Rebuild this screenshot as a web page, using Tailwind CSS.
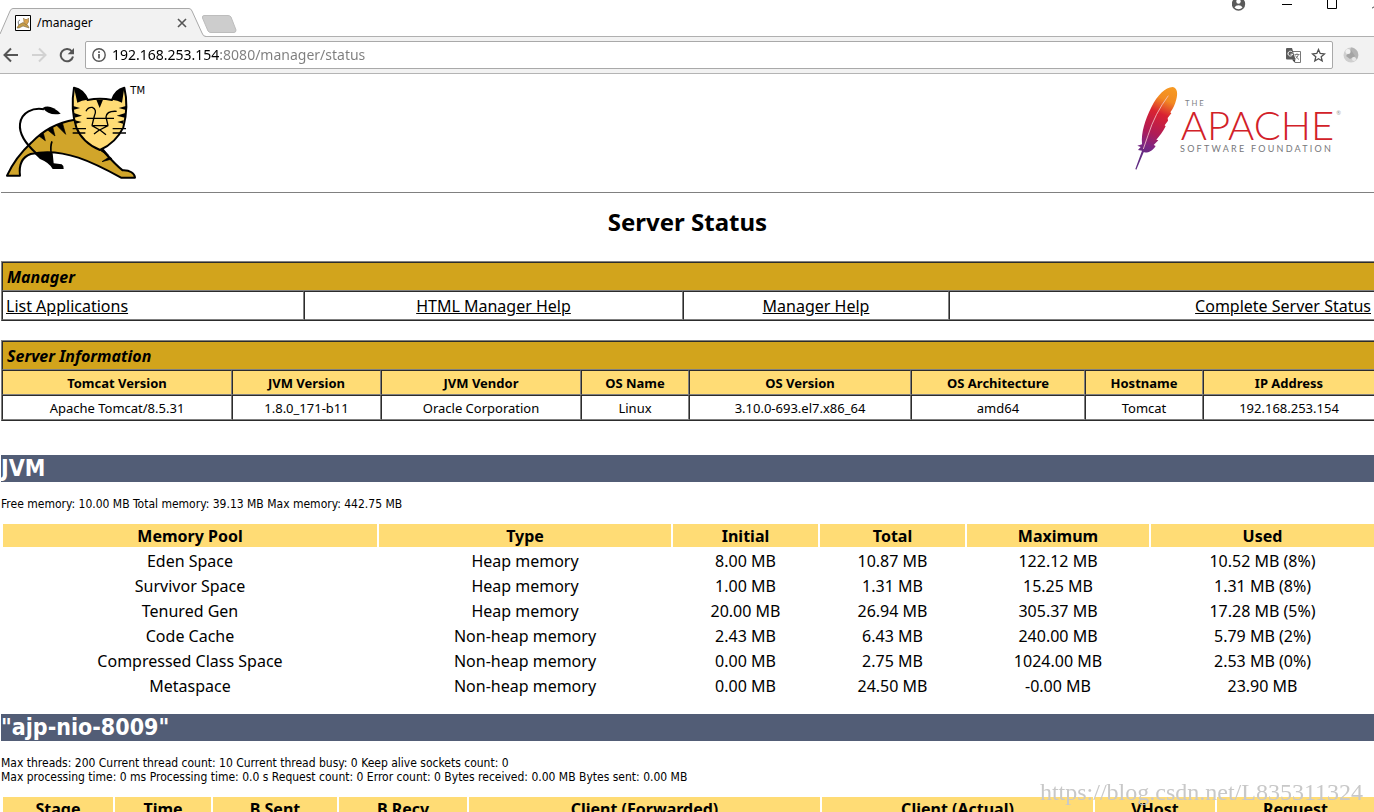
<!DOCTYPE html>
<html lang="en">

<head>
  <meta charset="UTF-8" />
  <meta name="viewport" content="width=device-width, initial-scale=1.0" />
  <title>/manager</title>
  <script src="https://cdn.jsdelivr.net/npm/@tailwindcss/browser@4"></script>
</head>

<body class="h-screen overflow-hidden bg-white text-black font-['Noto_Sans','Open_Sans',sans-serif] text-[16px] leading-[23px]">
  <!-- Browser chrome -->
  <div class="border-b border-[#b4b4b4] bg-[#f2f2f2]">
    <div class="relative flex h-[37px] border-b border-[#b0b0b0] bg-white">
      <svg class="absolute top-0 left-0 h-[37px] w-[240px]" viewBox="0 0 240 37" fill="none">
        <path d="M-1 37 0 34 10 11Q11 8.500 13 8.500H189Q191 8.500 192 11L202 33Q203 36.500 206 36.500V37Z" fill="#f2f2f2" />
        <path d="M0 34 10 11Q11 8.500 13 8.500H189Q191 8.500 192 11L202 33Q203 36.500 206 36.500" stroke="#a9a9a9" />
        <path d="M204 15.500H228Q230 15.500 231 17L236 30Q236 32.500 234 32.500H211Q209 32.500 208 31L202.500 18Q202 15.500 204 15.500Z" fill="#cdcdcd" stroke="#bdbdbd" />
      </svg>
      <div class="relative flex w-[204px] items-center gap-1.5 pt-[9px] pl-[15px] text-[12px]">
        <svg class="size-4" viewBox="0 0 16 16" fill="none">
          <path d="M.5.500h15v15H.5Z" fill="#fff" stroke="#000" />
          <path d="M2 13Q3 9 8 7.500L13 10.500 14 13 8 11 4 13Z" fill="#c49c4a" stroke="#6b5836" stroke-width=".5" />
          <path d="M8.500 3 10 4.500H12L13.500 3V7L11.500 10 9 7.500Z" fill="#d8a24c" stroke="#80602b" stroke-width=".5" />
          <path d="M4 10Q2 6 5 5" stroke="#777" />
        </svg>
        <span class="flex-1">/manager</span>
        <button aria-label="Close tab" class="mr-[17px]">
          <svg class="size-2.5" viewBox="0 0 10 10" stroke="#555" stroke-width="1.600"><path d="m1 1 8 8M9 1 1 9" /></svg>
        </button>
      </div>
      <div class="ml-auto flex h-3 items-start">
        <button aria-label="Profile" class="mr-[36px]">
          <svg class="h-3 w-[14px]" viewBox="0 0 14 12"><circle cx="6.500" cy="4" r="6.700" fill="#5a5a5a" /><circle cx="6.500" cy="1.500" r="2.200" fill="#fff" /><path d="M2.500 7.500Q3.500 5.200 6.500 5.200T10.500 7.500Q9 9.300 6.500 9.300T2.500 7.500Z" fill="#fff" /></svg>
        </button>
        <button aria-label="Minimize" class="mr-[35px]">
          <svg class="h-3 w-[10px]" viewBox="0 0 10 12"><path d="M0 4.500h10" stroke="#000" /></svg>
        </button>
        <button aria-label="Maximize" class="mr-[35px]">
          <svg class="h-3 w-[10px]" viewBox="0 0 10 12"><path d="M.5-1V8.500h9V-1" fill="none" stroke="#000" /></svg>
        </button>
        <button aria-label="Close">
          <svg class="h-3 w-[2px]" viewBox="0 0 2 12"><path d="M0 8.500 2 6.500" stroke="#000" /></svg>
        </button>
      </div>
    </div>
    <div class="flex h-9 items-center">
      <button aria-label="Back" class="ml-[3px]">
        <svg class="size-4" viewBox="0 0 16 16" fill="none" stroke="#555" stroke-width="2"><path d="M15 8H2M8 1.500 1.500 8 8 14.500" /></svg>
      </button>
      <button aria-label="Forward" class="ml-3">
        <svg class="size-4" viewBox="0 0 16 16" fill="none" stroke="#d2d2d2" stroke-width="2"><path d="M1 8h13M8 1.500 14.500 8 8 14.500" /></svg>
      </button>
      <button aria-label="Reload" class="ml-3">
        <svg class="size-4" viewBox="0 0 16 16" fill="none"><path d="M13 4.500A6.200 6.200 0 1 0 14 9.500" stroke="#555" stroke-width="2" /><path d="M15 1V7.300H8.700Z" fill="#555" /></svg>
      </button>
      <div class="ml-2.5 flex h-7 flex-1 items-center rounded-xs border border-[#a9a9a9] bg-white px-1.5">
        <svg class="size-[14px]" viewBox="0 0 14 14" fill="none" stroke="#555"><circle cx="7" cy="7" r="6.200" stroke-width="1.400" /><path d="M7 6v4.500M7 3.200V5" stroke-width="1.700" /></svg>
        <input aria-label="Address" type="text" value="192.168.253.154:8080/manager/status" class="ml-1.5 flex-1 bg-[linear-gradient(90deg,#000_108px,#7d7d7d_108px)] bg-clip-text text-[14px] leading-5 text-transparent outline-none" />
        <button aria-label="Translate">
          <svg class="size-[15px]" viewBox="0 0 15 15"><path d="M5 3.500H14.500V14.500H9Z" fill="#fff" stroke="#777" /><path d="M1 0H6L9.500 11.500H1Q0 11.500 0 10.500V1Q0 0 1 0Z" fill="#5a5a5a" /><path d="M6.300 4.200A2.400 2.400 0 1 0 6.700 6.200H4.500" fill="none" stroke="#fff" /><path d="M8.500 6.500H13.500M11 5.300V6.500M12.500 6.500Q11.500 9.500 9.500 10.500M9.500 7.500Q11 10.500 13 11.500" fill="none" stroke="#777" stroke-width=".9" /><path d="M6 11.500H9.500L8.500 14.500Z" fill="#444" /></svg>
        </button>
        <button aria-label="Bookmark" class="ml-2.5">
          <svg class="size-[15px]" viewBox="0 0 15 15"><path d="m7.500 1.500 1.700 4 4.300.4-3.300 2.900 1 4.200-3.700-2.200L3.800 13l1-4.200L1.500 5.900l4.300-.4Z" fill="none" stroke="#505050" stroke-width="1.300" /></svg>
        </button>
      </div>
      <button aria-label="Extension" class="mr-[15px] ml-2.5">
        <svg class="size-4" viewBox="0 0 16 16"><circle cx="8" cy="8" r="7.500" fill="#cfcfcf" /><path d="M8 .5A7.500 7.500 0 0 1 14 12L9 9 7 4Z" fill="#b4b4b4" /><path d="M8 3 12 9 7 12 3 9Z" fill="#a4a4a4" /><circle cx="5" cy="4.500" r="2.500" fill="#f1f1f1" /><circle cx="11" cy="12" r="2" fill="#e8e8e8" /></svg>
      </button>
    </div>
  </div>

  <main class="pl-px">
    <!-- Logos -->
    <header class="flex justify-between border-b border-[#808080] pt-1.5 pb-2">
      <svg class="h-[104px] w-[160px]" viewBox="3 0 480 312" role="img" aria-label="Tomcat" stroke-linejoin="round">
        <path d="M21 287C38 250 65 215 95 187C130 150 175 127 224 119L305 208C325 230 350 258 368 271C390 270 404 280 405 293H363C325 272 285 250 235 233C185 216 135 212 92 222C65 232 56 255 60 287Z" fill="#d1a52a" stroke="#000" stroke-width="6" />
        <path d="M117 168 130 160 136 182ZM143 150 158 141 165 168ZM170 136 187 128 197 163Z" stroke="#000" stroke-width="2" />
        <path d="M303 213 310 207 327 227ZM326 232 330 230 336 237 306 245Z" stroke="#000" stroke-width="2" />
        <path d="M102 220Q130 214 158 220L161 250 185 253Q192 257 191 267H158Q148 248 120 237Z" />
        <path d="M156 184Q150 200 154 222" fill="none" stroke="#000" stroke-width="5" />
        <path d="M110 221C75 190 57 160 60 132C64 96 100 82 132 88" fill="none" stroke="#000" stroke-width="6" />
        <path d="M128 84Q150 70 182 101Q148 109 128 84Z" />
        <path d="M222 23Q250 28 263 60Q300 52 336 60Q345 30 373 23C382 60 381 100 370 142Q348 188 300 210Q247 188 229 142C215 100 216 60 222 23Z" fill="#ffdc75" stroke="#000" stroke-width="6" />
        <path d="M222 23Q250 30 262 59Q245 60 232 68ZM373 23Q346 30 336 59Q353 60 366 68ZM289 59H309L299 84Z" />
        <path d="M219 78 240 84 219 90ZM222 99 246 107 223 113ZM225 121 245 126 228 131ZM378 78 356 84 378 90ZM376 99 350 107 375 113ZM371 121 352 126 369 131Z" />
        <path d="M218 146H258M218 159H256M338 146H378M338 159H378M260 115H342M276 137H324L299 150ZM299 149 282 162M299 149 318 164M258 94Q263 81 277 82Q292 89 283 108L276 137M324 137 318 111Q320 92 350 94" fill="none" stroke="#000" stroke-width="4" />
        <text x="391" y="41" class="font-['DejaVu_Sans'] text-[30px]">TM</text>
      </svg>
      <svg class="h-[104px] w-[254px]" viewBox="0 12 762 312" role="img" aria-label="The Apache Software Foundation">
        <defs>
          <linearGradient id="feather" x1="150" y1="35" x2="65" y2="235" gradientUnits="userSpaceOnUse">
            <stop stop-color="#f69923" /><stop offset=".18" stop-color="#f28a22" /><stop offset=".38" stop-color="#d92231" /><stop offset=".68" stop-color="#ad1c58" /><stop offset=".86" stop-color="#7e2683" /><stop offset="1" stop-color="#612c83" />
          </linearGradient>
        </defs>
        <path d="M158 33C172 35 174 53 169 70C165 88 158 99 151 109L154 112 143 126 144 134 134 148 137 151C128 168 119 180 109 191L115 193 101 207 107 210C96 227 83 231 71 229L49 281 46 279 66 224 54 222 62 213 52 209 66 205C63 169 75 133 94 94C113 56 136 34 158 33Z" fill="url(#feather)" />
        <path d="M145 59Q105 112 84 178L70 219" fill="none" stroke="#f5c5c9" stroke-width="2.500" />
        <text x="195" y="89" fill="#808285" class="font-['Lato'] text-[23px] tracking-[0.25em]">THE</text>
        <text x="182" y="192" fill="#d22128" class="font-['Lato'] text-[120px] font-light">APACHE</text>
        <text x="649" y="117" fill="#999" class="font-['Lato'] text-[17px]">®</text>
        <text x="180" y="228" fill="#77787b" class="font-['Lato'] text-[27px] tracking-[0.25em]">SOFTWARE FOUNDATION</text>
      </svg>
    </header>

    <h1 class="pt-[11px] pb-[13px] text-center text-[24px] leading-9 font-bold">Server Status</h1>

    <!-- Manager links -->
    <table class="mt-2 w-full border-separate border-spacing-0 border-y border-l border-t-[#808080] border-b-[#2c2c2c] border-l-[#808080] leading-[21px] [&_td]:pt-0.5 [&_th]:pt-0.5">
      <thead>
        <tr class="h-[29px] bg-[#d2a41c] text-left italic">
          <th colspan="4" class="border-t border-b border-l border-t-[#2c2c2c] border-b-[#808080] border-l-[#2c2c2c] px-1 font-bold">Manager</th>
        </tr>
      </thead>
      <tbody>
        <tr class="h-[29px] text-center underline">
          <td class="w-[302px] border border-t-[#2c2c2c] border-r-[#808080] border-b-[#808080] border-l-[#2c2c2c] px-[3px] text-left"><a href="#">List Applications</a></td>
          <td class="w-[379px] border border-t-[#2c2c2c] border-r-[#808080] border-b-[#808080] border-l-[#2c2c2c]"><a href="#">HTML Manager Help</a></td>
          <td class="w-[266px] border border-t-[#2c2c2c] border-r-[#808080] border-b-[#808080] border-l-[#2c2c2c]"><a href="#">Manager Help</a></td>
          <td class="w-[425px] border-t border-b border-l border-t-[#2c2c2c] border-b-[#808080] border-l-[#2c2c2c] px-[3px] text-right"><a href="#">Complete Server Status</a></td>
        </tr>
      </tbody>
    </table>

    <!-- Server information -->
    <table class="mt-[19px] w-full border-separate border-spacing-0 border-y border-l border-t-[#808080] border-b-[#2c2c2c] border-l-[#808080] leading-[21px] [&_td]:pt-0.5 [&_th]:pt-0.5">
      <thead>
        <tr class="h-[29px] bg-[#d2a41c] text-left italic">
          <th colspan="8" class="border-t border-b border-l border-t-[#2c2c2c] border-b-[#808080] border-l-[#2c2c2c] px-1 font-bold">Server Information</th>
        </tr>
        <tr class="h-[25px] bg-[#ffdc75] text-[13px]">
          <th class="w-[230px] border border-t-[#2c2c2c] border-r-[#808080] border-b-[#808080] border-l-[#2c2c2c]">Tomcat Version</th>
          <th class="w-[149px] border border-t-[#2c2c2c] border-r-[#808080] border-b-[#808080] border-l-[#2c2c2c]">JVM Version</th>
          <th class="w-[200px] border border-t-[#2c2c2c] border-r-[#808080] border-b-[#808080] border-l-[#2c2c2c]">JVM Vendor</th>
          <th class="w-[108px] border border-t-[#2c2c2c] border-r-[#808080] border-b-[#808080] border-l-[#2c2c2c]">OS Name</th>
          <th class="w-[222px] border border-t-[#2c2c2c] border-r-[#808080] border-b-[#808080] border-l-[#2c2c2c]">OS Version</th>
          <th class="w-[174px] border border-t-[#2c2c2c] border-r-[#808080] border-b-[#808080] border-l-[#2c2c2c]">OS Architecture</th>
          <th class="w-[118px] border border-t-[#2c2c2c] border-r-[#808080] border-b-[#808080] border-l-[#2c2c2c]">Hostname</th>
          <th class="w-[171px] border-t border-b border-l border-t-[#2c2c2c] border-b-[#808080] border-l-[#2c2c2c]">IP Address</th>
        </tr>
      </thead>
      <tbody>
        <tr class="h-[25px] text-center text-[13px]">
          <td class="border border-t-[#2c2c2c] border-r-[#808080] border-b-[#808080] border-l-[#2c2c2c]">Apache Tomcat/8.5.31</td>
          <td class="border border-t-[#2c2c2c] border-r-[#808080] border-b-[#808080] border-l-[#2c2c2c]">1.8.0_171-b11</td>
          <td class="border border-t-[#2c2c2c] border-r-[#808080] border-b-[#808080] border-l-[#2c2c2c]">Oracle Corporation</td>
          <td class="border border-t-[#2c2c2c] border-r-[#808080] border-b-[#808080] border-l-[#2c2c2c]">Linux</td>
          <td class="border border-t-[#2c2c2c] border-r-[#808080] border-b-[#808080] border-l-[#2c2c2c]">3.10.0-693.el7.x86_64</td>
          <td class="border border-t-[#2c2c2c] border-r-[#808080] border-b-[#808080] border-l-[#2c2c2c]">amd64</td>
          <td class="border border-t-[#2c2c2c] border-r-[#808080] border-b-[#808080] border-l-[#2c2c2c]">Tomcat</td>
          <td class="border-t border-b border-l border-t-[#2c2c2c] border-b-[#808080] border-l-[#2c2c2c]">192.168.253.154</td>
        </tr>
      </tbody>
    </table>

    <!-- JVM -->
    <h2 class="mt-[34px] bg-[#525d76] font-['DejaVu_Sans_Condensed','DejaVu_Sans',sans-serif] text-[23px] leading-[27px] font-bold text-white">JVM</h2>
    <p class="mt-[15px] mb-[11px] font-['DejaVu_Sans_Condensed','DejaVu_Sans',sans-serif] text-[12px] leading-[14px]">Free memory: 10.00 MB Total memory: 39.13 MB Max memory: 442.75 MB</p>
    <table class="w-[calc(100%+2px)] border-separate border-spacing-[2px] text-center leading-[21px] [&_td]:pt-0.5 [&_th]:pt-0.5">
      <thead>
        <tr class="bg-[#ffdc75]">
          <th class="w-[374px]">Memory Pool</th>
          <th class="w-[292px]">Type</th>
          <th class="w-[145px]">Initial</th>
          <th class="w-[145px]">Total</th>
          <th class="w-[182px]">Maximum</th>
          <th class="w-[223px]">Used</th>
        </tr>
      </thead>
      <tbody>
        <tr><td>Eden Space</td><td>Heap memory</td><td>8.00 MB</td><td>10.87 MB</td><td>122.12 MB</td><td>10.52 MB (8%)</td></tr>
        <tr><td>Survivor Space</td><td>Heap memory</td><td>1.00 MB</td><td>1.31 MB</td><td>15.25 MB</td><td>1.31 MB (8%)</td></tr>
        <tr><td>Tenured Gen</td><td>Heap memory</td><td>20.00 MB</td><td>26.94 MB</td><td>305.37 MB</td><td>17.28 MB (5%)</td></tr>
        <tr><td>Code Cache</td><td>Non-heap memory</td><td>2.43 MB</td><td>6.43 MB</td><td>240.00 MB</td><td>5.79 MB (2%)</td></tr>
        <tr><td>Compressed Class Space</td><td>Non-heap memory</td><td>0.00 MB</td><td>2.75 MB</td><td>1024.00 MB</td><td>2.53 MB (0%)</td></tr>
        <tr><td>Metaspace</td><td>Non-heap memory</td><td>0.00 MB</td><td>24.50 MB</td><td>-0.00 MB</td><td>23.90 MB</td></tr>
      </tbody>
    </table>

    <!-- Connector -->
    <h2 class="mt-[15px] bg-[#525d76] font-['DejaVu_Sans_Condensed','DejaVu_Sans',sans-serif] text-[23px] leading-[27px] font-bold text-white">"ajp-nio-8009"</h2>
    <p class="mt-[15px] mb-[11px] font-['DejaVu_Sans_Condensed','DejaVu_Sans',sans-serif] text-[12px] leading-[14px]">Max threads: 200 Current thread count: 10 Current thread busy: 0 Keep alive sockets count: 0<br />Max processing time: 0 ms Processing time: 0.0 s Request count: 0 Error count: 0 Bytes received: 0.00 MB Bytes sent: 0.00 MB</p>
    <table class="w-[calc(100%+2px)] border-separate border-spacing-[2px] leading-[21px] [&_th]:pt-0.5">
      <thead>
        <tr class="bg-[#ffdc75]">
          <th class="w-[110px]">Stage</th>
          <th class="w-[96px]">Time</th>
          <th class="w-[124px]">B Sent</th>
          <th class="w-[128px]">B Recv</th>
          <th class="w-[351px]">Client (Forwarded)</th>
          <th class="w-[271px]">Client (Actual)</th>
          <th class="w-[120px]">VHost</th>
          <th class="w-[157px]">Request</th>
        </tr>
      </thead>
    </table>
  </main>

  <div class="fixed right-[11px] bottom-2 font-['Liberation_Serif',serif] text-[24px] leading-6 text-[#c8c8c8]">https://blog.csdn.net/L835311324</div>
</body>

</html>
